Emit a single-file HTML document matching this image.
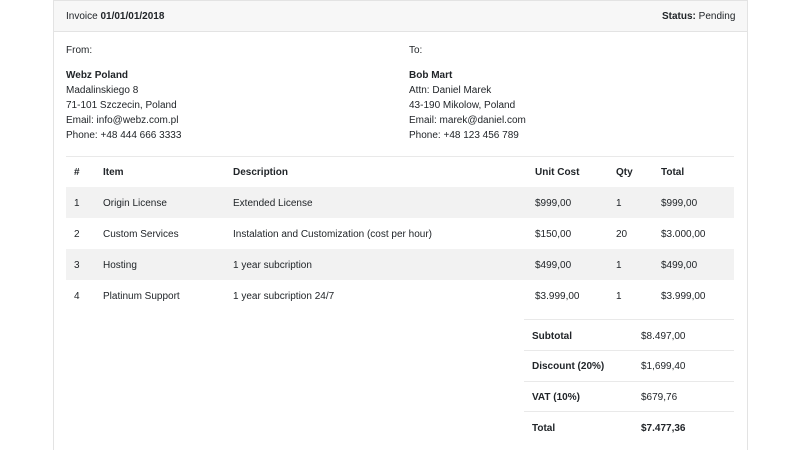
<!DOCTYPE html>
<html><head><style>
*{margin:0;padding:0;box-sizing:border-box}
html,body{width:800px;height:450px;overflow:hidden}
body{background:#fff;font-family:"Liberation Sans",sans-serif;font-size:10px;color:#212529;position:relative}
.card{position:absolute;left:53px;top:0;width:695px;height:452px;border:1px solid #e3e3e3}
.hdr{position:absolute;left:53px;top:0;width:695px;height:32px;background:#f7f7f7;border:1px solid #e3e3e3}
.t{position:absolute;white-space:nowrap;line-height:12px;margin-top:1px}
b{font-weight:bold}
.row{position:absolute;left:66px;width:668px;height:31px}
.g{background:#f2f2f2}
.line{position:absolute;height:1px;background:#e9e9e9}
</style></head><body>
<div class="card"></div>
<div class="hdr"></div>
<div class="t" style="left:66px;top:10px">Invoice <b>01/01/01/2018</b></div>
<div class="t" style="left:662px;top:10px"><b>Status:</b> Pending</div>

<div class="t" style="left:66px;top:44px">From:</div>
<div class="t" style="left:66px;top:67px;line-height:15px"><b>Webz Poland</b><br>Madalinskiego 8<br>71-101 Szczecin, Poland<br>Email: info@webz.com.pl<br>Phone: +48 444 666 3333</div>
<div class="t" style="left:409px;top:44px">To:</div>
<div class="t" style="left:409px;top:67px;line-height:15px"><b>Bob Mart</b><br>Attn: Daniel Marek<br>43-190 Mikolow, Poland<br>Email: marek@daniel.com<br>Phone: +48 123 456 789</div>

<div class="line" style="left:66px;top:156px;width:668px"></div>
<div class="t" style="left:74px;top:166px"><b>#</b></div>
<div class="t" style="left:103px;top:166px"><b>Item</b></div>
<div class="t" style="left:233px;top:166px"><b>Description</b></div>
<div class="t" style="left:535px;top:166px"><b>Unit Cost</b></div>
<div class="t" style="left:616px;top:166px"><b>Qty</b></div>
<div class="t" style="left:661px;top:166px"><b>Total</b></div>

<div class="row g" style="top:187px"></div>
<div class="row g" style="top:249px"></div>

<div class="t" style="left:74px;top:197px">1</div><div class="t" style="left:103px;top:197px">Origin License</div><div class="t" style="left:233px;top:197px">Extended License</div><div class="t" style="left:535px;top:197px">$999,00</div><div class="t" style="left:616px;top:197px">1</div><div class="t" style="left:661px;top:197px">$999,00</div>
<div class="t" style="left:74px;top:228px">2</div><div class="t" style="left:103px;top:228px">Custom Services</div><div class="t" style="left:233px;top:228px">Instalation and Customization (cost per hour)</div><div class="t" style="left:535px;top:228px">$150,00</div><div class="t" style="left:616px;top:228px">20</div><div class="t" style="left:661px;top:228px">$3.000,00</div>
<div class="t" style="left:74px;top:259px">3</div><div class="t" style="left:103px;top:259px">Hosting</div><div class="t" style="left:233px;top:259px">1 year subcription</div><div class="t" style="left:535px;top:259px">$499,00</div><div class="t" style="left:616px;top:259px">1</div><div class="t" style="left:661px;top:259px">$499,00</div>
<div class="t" style="left:74px;top:290px">4</div><div class="t" style="left:103px;top:290px">Platinum Support</div><div class="t" style="left:233px;top:290px">1 year subcription 24/7</div><div class="t" style="left:535px;top:290px">$3.999,00</div><div class="t" style="left:616px;top:290px">1</div><div class="t" style="left:661px;top:290px">$3.999,00</div>

<div class="line" style="left:524px;top:319px;width:210px"></div>
<div class="line" style="left:524px;top:350px;width:210px"></div>
<div class="line" style="left:524px;top:381px;width:210px"></div>
<div class="line" style="left:524px;top:411px;width:210px"></div>
<div class="t" style="left:532px;top:330px"><b>Subtotal</b></div><div class="t" style="left:641px;top:330px">$8.497,00</div>
<div class="t" style="left:532px;top:360px"><b>Discount (20%)</b></div><div class="t" style="left:641px;top:360px">$1,699,40</div>
<div class="t" style="left:532px;top:391px"><b>VAT (10%)</b></div><div class="t" style="left:641px;top:391px">$679,76</div>
<div class="t" style="left:532px;top:422px"><b>Total</b></div><div class="t" style="left:641px;top:422px"><b>$7.477,36</b></div>
</body></html>
